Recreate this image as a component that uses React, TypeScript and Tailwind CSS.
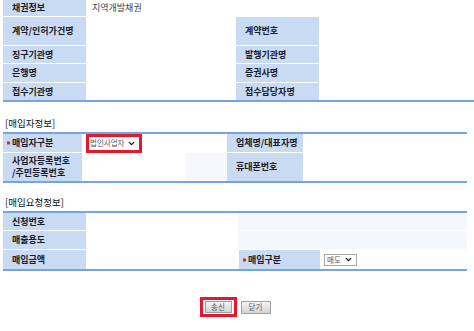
import { ChevronDown } from "lucide-react";

const font = { fontFamily: '"Noto Sans CJK KR", "Noto Sans", sans-serif' };

// label cell
const Label = ({ text, req, lines }: { text?: string; req?: boolean; lines?: string[] }) => (
  <div className="relative flex items-center bg-[#c9dbf2] pl-[9px] text-[9px] font-bold leading-[10px] text-[#1b1b28]">
    {req && <span className="absolute left-[4px] top-1/2 h-[3px] w-[3px] -translate-y-1/2 bg-[#e0203a]" />}
    {lines ? (
      <div className="flex flex-col">
        {lines.map((l) => (
          <span key={l} className="leading-[12px]">
            {l}
          </span>
        ))}
      </div>
    ) : (
      <span>{text}</span>
    )}
  </div>
);

const Cell = ({ className = "", children }: { className?: string; children?: React.ReactNode }) => (
  <div className={`flex items-center bg-white ${className}`}>{children}</div>
);

const Select = ({ value, className = "" }: { value: string; className?: string }) => (
  <div
    className={`flex items-center justify-between whitespace-nowrap bg-white text-[7.5px] leading-none text-[#555] ${className}`}
  >
    <span>{value}</span>
    <ChevronDown size={9} strokeWidth={3.5} className="shrink-0 text-[#111]" />
  </div>
);

export default function App() {
  return (
    <div className="h-[331px] w-[474px] overflow-hidden bg-white pl-[3px]" style={font}>
      {/* 채권정보 */}
      <div className="grid grid-cols-[83px_150px_83px_1fr] grid-rows-[16px_28px_17px_18px_17px] gap-y-px border-b-2 border-[#74a5dc] bg-white">
        <Label text="채권정보" />
        <Cell className="col-span-3 bg-[#f4f7fb] pl-[6px] text-[9px] text-[#444]">지역개발채권</Cell>
        <Label text="계약/인허가건명" />
        <Cell />
        <Label text="계약번호" />
        <Cell />
        <Label text="징구기관명" />
        <Cell />
        <Label text="발행기관명" />
        <Cell />
        <Label text="은행명" />
        <Cell />
        <Label text="증권사명" />
        <Cell />
        <Label text="접수기관명" />
        <Cell />
        <Label text="접수담당자명" />
        <Cell />
      </div>

      <div className="mt-[13px] h-[17px] pl-[2px] text-[9.5px] leading-[17px] text-[#111]">[매입자정보]</div>

      {/* 매입자정보 */}
      <div className="grid w-[464px] grid-cols-[79px_145px_76px_1fr] grid-rows-[18px_28px] gap-y-px border-y-2 border-[#74a5dc] bg-white">
        <Label text="매입자구분" req />
        <Cell className="pl-[4px]">
          <div className="border-[3px] border-[#e3182d] py-[1px] pl-[1px] pr-[3px]">
            <Select value="법인사업자" className="h-[11px] w-[46px]" />
          </div>
        </Cell>
        <Label text="업체명/대표자명" />
        <Cell />
        <Label lines={["사업자등록번호", "/주민등록번호"]} />
        <Cell className="bg-[linear-gradient(to_right,#ffffff_72%,#f6f8fb_72%)]" />
        <Label text="휴대폰번호" />
        <Cell />
      </div>

      <div className="mt-[11px] h-[17px] pl-[2px] text-[9.5px] leading-[17px] text-[#111]">[매입요청정보]</div>

      {/* 매입요청정보 */}
      <div className="grid w-[464px] grid-cols-[83px_153px_81px_1fr] grid-rows-[17px_18px_19px] gap-y-px border-y-2 border-[#74a5dc] bg-white">
        <Label text="신청번호" />
        <Cell className="col-span-3 bg-[linear-gradient(to_right,#ffffff_40%,#f4f7fb_40%)]" />
        <Label text="매출용도" />
        <Cell className="col-span-3 bg-[linear-gradient(to_right,#ffffff_40%,#f4f7fb_40%)]" />
        <Label text="매입금액" />
        <Cell />
        <Label text="매입구분" req />
        <Cell className="pl-[4px]">
          <Select value="매도" className="h-[12px] w-[33px] border border-[#a9a9a9] pl-[2px] pr-[3px]" />
        </Cell>
      </div>

      {/* 버튼 */}
      <div className="mt-[26px] flex w-[464px] items-center justify-center gap-[4px]">
        <div className="border-[3px] border-[#e3182d] px-[2px] py-[1px]">
          <button className="flex h-[12px] w-[27px] items-center justify-center border border-[#a0a0a0] bg-[linear-gradient(#f4f4f4,#d4d4d4)] text-[7.5px] leading-none text-[#555]">
            송신
          </button>
        </div>
        <button className="flex h-[13px] w-[30px] items-center justify-center border border-[#a0a0a0] bg-[linear-gradient(#f4f4f4,#d4d4d4)] text-[7.5px] leading-none text-[#555]">
          닫기
        </button>
      </div>
    </div>
  );
}
